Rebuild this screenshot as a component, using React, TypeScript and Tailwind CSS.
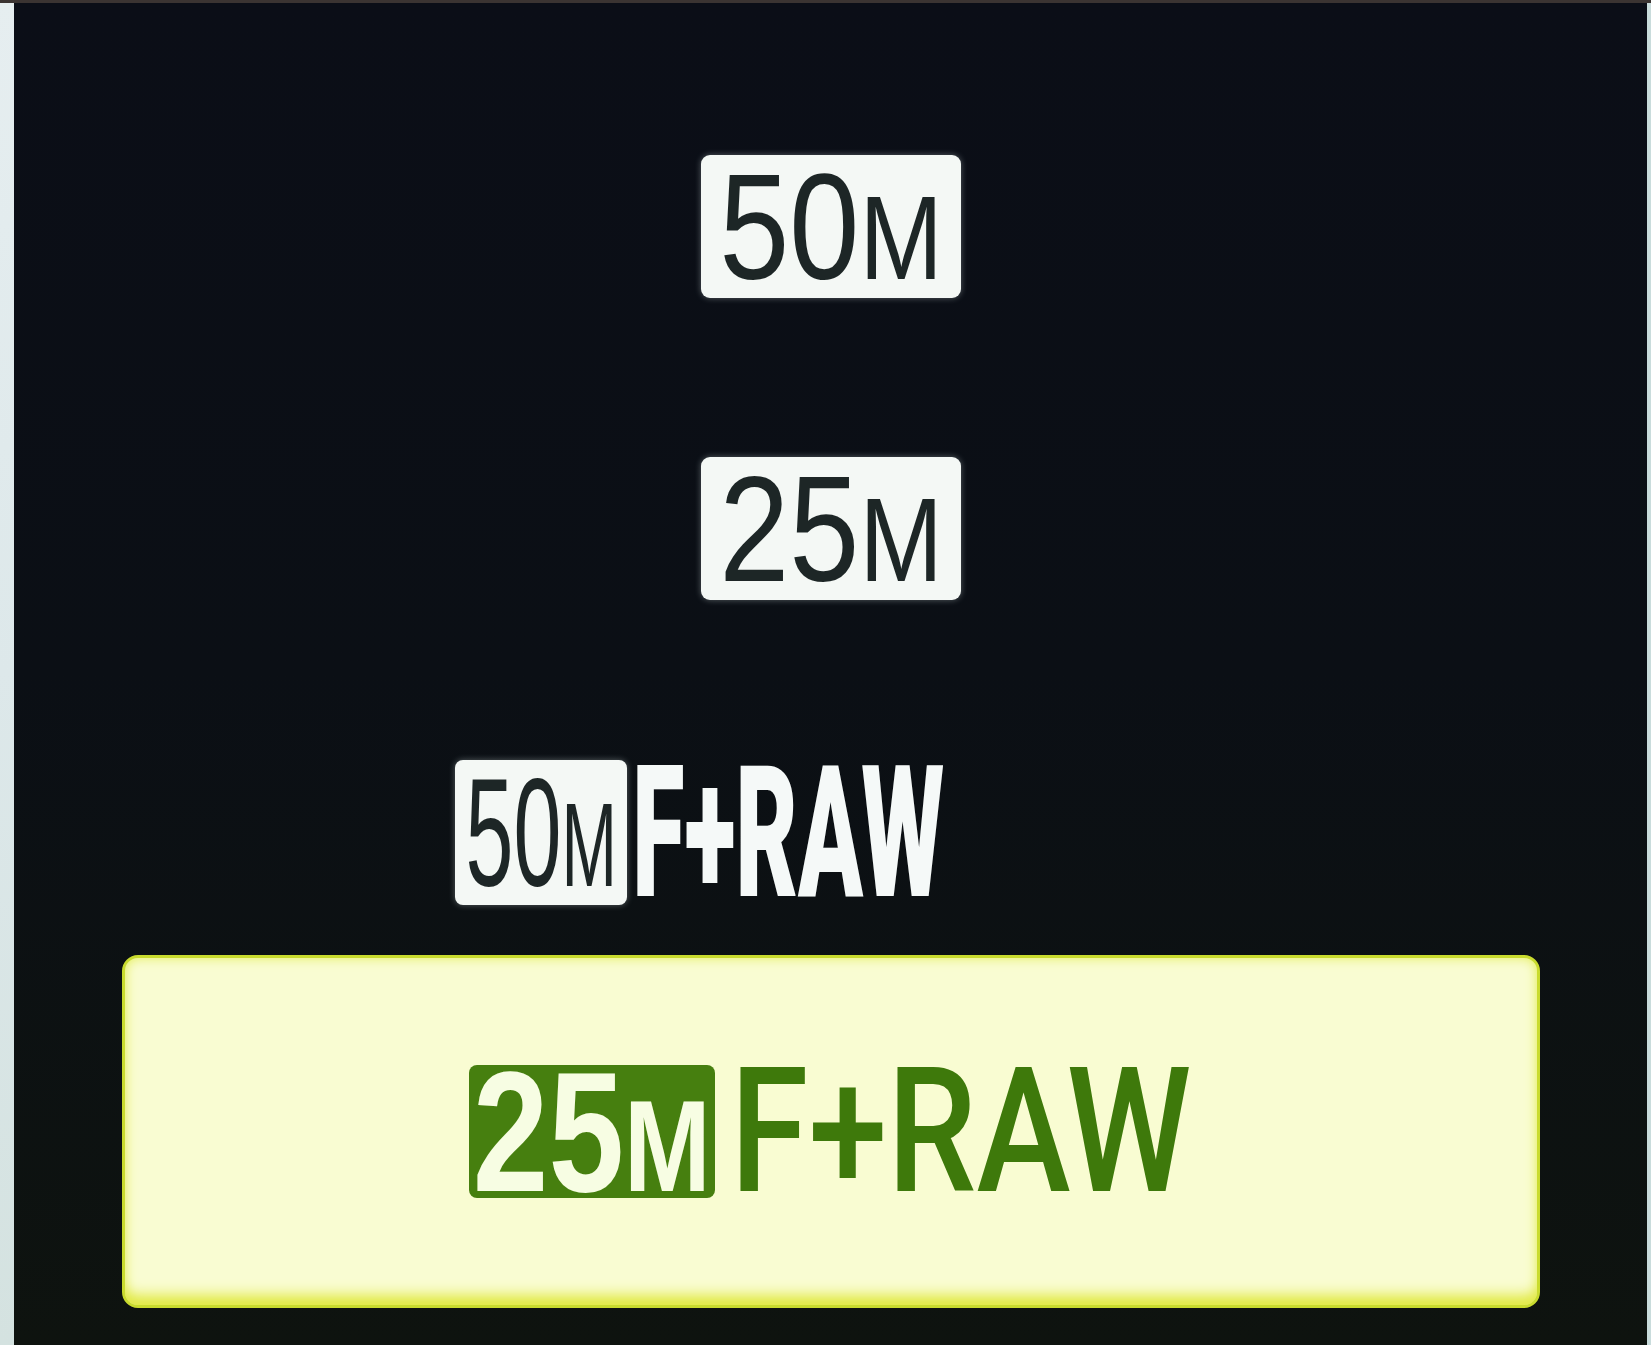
import React from "react"

// Camera "image quality" picker, photographed off the rear screen
export default function App() {
    return (
        <div className="w-[1651px] h-[1345px] flex bg-linear-to-b from-[#0b0e17] via-[#0b0f15] to-[#0e130f] font-['Liberation_Sans',Arial,sans-serif] overflow-hidden border-t-[3px] border-[#3b3432]">
            {/* left bezel reflection */}
            <div className="w-[14px] h-full bg-linear-to-b from-[#e6eef0] via-[#dde8ea] to-[#d4e2e0]" />

            <div className="flex-1 flex flex-col items-center pt-[152px]">
                {/* 50M */}
                <div className="h-[143px] flex">
                    <div className="w-[260px] h-full rounded-[9px] bg-[#f4f8f5] shadow-[0_0_6px_rgba(230,245,245,0.35)] flex items-center justify-center">
                        <span className="inline-block whitespace-nowrap leading-none text-[#1d2626] text-[150px] scale-x-[0.84]">
                            50<span className="text-[119px]">M</span>
                        </span>
                    </div>
                </div>

                {/* 25M */}
                <div className="h-[143px] flex mt-[159px]">
                    <div className="w-[260px] h-full rounded-[9px] bg-[#f4f8f5] shadow-[0_0_6px_rgba(230,245,245,0.35)] flex items-center justify-center">
                        <span className="inline-block whitespace-nowrap leading-none text-[#1d2626] text-[150px] scale-x-[0.84]">
                            25<span className="text-[119px]">M</span>
                        </span>
                    </div>
                </div>

                {/* 50M F+RAW */}
                <div className="h-[145px] flex items-center gap-[9px] mt-[160px] self-start ml-[441px]">
                    <div className="w-[172px] h-full rounded-[8px] bg-[#f4f8f5] shadow-[0_0_6px_rgba(230,245,245,0.35)] flex items-center justify-center">
                        <span className="inline-block whitespace-nowrap leading-none text-[#1d2626] text-[154px] scale-x-[0.56]">
                            50<span className="text-[119px]">M</span>
                        </span>
                    </div>
                    <div className="w-[304px] h-full flex items-center justify-center">
                        <span className="inline-block whitespace-nowrap leading-none font-black font-['Roboto',sans-serif] text-[#f5f9f8] text-[184px] scale-x-[0.52]">
                            F+RAW
                        </span>
                    </div>
                </div>

                {/* selected: 25M F+RAW */}
                <div className="w-[1418px] h-[353px] mt-[50px] rounded-[16px] border-[3px] border-[#c9db2e] bg-[#f9fcd2] shadow-[inset_0_-18px_14px_-8px_#e2ea48,inset_0_0_12px_#e4ee5c] flex items-center justify-center">
                    <div className="h-[133px] flex items-center gap-[14px]">
                        <div className="w-[246px] h-full rounded-[8px] bg-[#467f0f] flex items-center justify-center">
                            <span className="inline-block whitespace-nowrap leading-none font-bold text-[#f7fde3] text-[170px] scale-x-[0.8]">
                                25<span className="text-[130px]">M</span>
                            </span>
                        </div>
                        <div className="w-[464px] h-full flex items-center justify-center">
                            <span className="inline-block whitespace-nowrap leading-none font-medium font-['Roboto',sans-serif] text-[#3e790b] text-[174px] scale-x-[0.815]">
                                F+RAW
                            </span>
                        </div>
                    </div>
                </div>
            </div>

            {/* right bezel edge */}
            <div className="w-[4px] h-full bg-[#c9dcdc]" />
        </div>
    )
}
